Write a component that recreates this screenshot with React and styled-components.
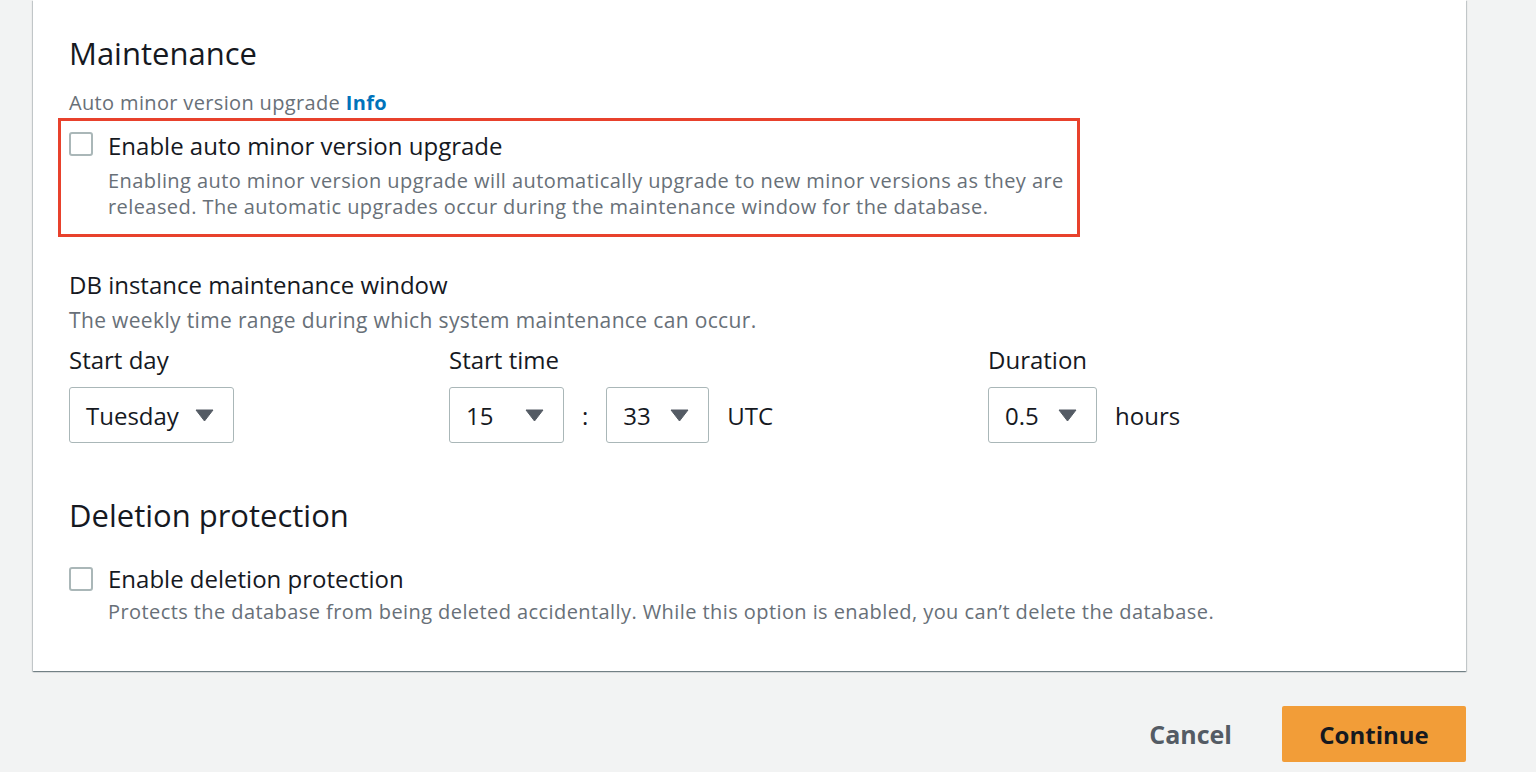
import styled, { createGlobalStyle } from "styled-components";

const GlobalStyle = createGlobalStyle`
  body {
    margin: 0;
    background: #f2f3f3;
    font-family: "Open Sans", "Noto Sans", sans-serif;
    color: #16191f;
  }
  p, h2 {
    margin: 0;
  }
`;

const Page = styled.div`
  padding-left: 33px;
  width: 1433px;
`;

const Card = styled.div`
  background: #fff;
  padding: 31px 36px 46px 36px;
  box-shadow: 0 1px 1px 0 rgba(0, 28, 36, 0.35), 1px 1px 1px 0 rgba(0, 28, 36, 0.15),
    -1px 1px 1px 0 rgba(0, 28, 36, 0.15);
`;

const Heading = styled.h2`
  font-size: 31px;
  font-weight: 400;
  line-height: 44px;
  margin-bottom: ${(props) => props.$gap || "0px"};
`;

const SubLabel = styled.p`
  font-size: 20px;
  letter-spacing: 0.35px;
  line-height: 26px;
  color: #687078;

  a {
    color: #0073bb;
    font-weight: 700;
    text-decoration: none;
  }
`;

const Highlight = styled.div`
  box-sizing: border-box;
  width: 1022px;
  margin-top: 2px;
  margin-left: -11px;
  border: 3px solid #e8412c;
  padding: 10px 8px 14px 8px;
`;

const CheckRow = styled.div`
  display: flex;
  gap: 15px;
  align-items: flex-start;
`;

const Box = styled.span`
  flex: none;
  box-sizing: border-box;
  width: 24px;
  height: 24px;
  margin-top: ${(props) => props.$top || "1px"};
  border: 2px solid #aab7b8;
  border-radius: 3px;
  background: #fff;
`;

const CheckText = styled.div`
  display: flex;
  flex-direction: column;
  gap: ${(props) => props.$gap || "7px"};
`;

const Label = styled.p`
  font-size: 24px;
  line-height: 30px;
  color: #16191f;
`;

const Desc = styled.p`
  font-size: 20px;
  letter-spacing: 0.42px;
  line-height: 26px;
  color: #687078;
  max-width: ${(props) => props.$max || "none"};
`;

const Hint = styled.p`
  margin-top: 7px !important;
  font-size: 21px;
  letter-spacing: 0.35px;
  line-height: 26px;
  color: #687078;
`;

const Field = styled.div`
  margin-top: ${(props) => props.$top || "0px"};
`;

const Columns = styled.div`
  display: flex;
  margin-top: 12px;
`;

const Column = styled.div`
  width: ${(props) => props.$width || "auto"};
  display: flex;
  flex-direction: column;
  gap: 12px;
`;

const Inline = styled.div`
  display: flex;
  align-items: center;
  gap: ${(props) => props.$gap || "18px"};
  font-size: 24px;
`;

const SelectBox = styled.div`
  box-sizing: border-box;
  width: ${(props) => props.$width};
  height: 56px;
  border: 1px solid #aab7b8;
  border-radius: 3px;
  display: flex;
  align-items: center;
  justify-content: space-between;
  padding: 0 19px 0 16px;
  font-size: 24px;
  color: #16191f;
`;

const Footer = styled.div`
  display: flex;
  justify-content: flex-end;
  align-items: center;
  gap: 50px;
  padding-top: 35px;
`;

const LinkButton = styled.button`
  border: none;
  background: none;
  font-family: inherit;
  font-weight: 700;
  font-size: 25px;
  color: #545b64;
  padding: 0;
`;

const PrimaryButton = styled.button`
  border: none;
  border-radius: 2px;
  background: #f29d38;
  width: 184px;
  height: 56px;
  font-family: inherit;
  font-weight: 700;
  font-size: 24px;
  color: #16191f;
`;

function Caret() {
  return (
    <svg width="19" height="13" viewBox="0 0 19 13">
      <path d="M1 1 L18 1 L9.5 12 Z" fill="#545b64" stroke="#545b64" strokeLinejoin="round" />
    </svg>
  );
}

function Select({ value, width }) {
  return (
    <SelectBox $width={width}>
      <span>{value}</span>
      <Caret />
    </SelectBox>
  );
}

function Checkbox({ label, description, max, boxTop, gap }) {
  return (
    <CheckRow>
      <Box $top={boxTop} />
      <CheckText $gap={gap}>
        <Label>{label}</Label>
        <Desc $max={max}>{description}</Desc>
      </CheckText>
    </CheckRow>
  );
}

export default function App() {
  return (
    <Page>
      <GlobalStyle />
      <Card>
        <Heading $gap="15px">Maintenance</Heading>
        <SubLabel>
          Auto minor version upgrade <a href="#">Info</a>
        </SubLabel>
        <Highlight>
          <Checkbox
            label="Enable auto minor version upgrade"
            description="Enabling auto minor version upgrade will automatically upgrade to new minor versions as they are released. The automatic upgrades occur during the maintenance window for the database."
            max="962px"
          />
        </Highlight>

        <Field $top="33px">
          <Label>DB instance maintenance window</Label>
          <Hint>The weekly time range during which system maintenance can occur.</Hint>
          <Columns>
            <Column $width="380px">
              <Label>Start day</Label>
              <Select value="Tuesday" width="165px" />
            </Column>
            <Column $width="539px">
              <Label>Start time</Label>
              <Inline>
                <Select value="15" width="115px" />
                <span>:</span>
                <Select value="33" width="103px" />
                <span>UTC</span>
              </Inline>
            </Column>
            <Column>
              <Label>Duration</Label>
              <Inline>
                <Select value="0.5" width="109px" />
                <span>hours</span>
              </Inline>
            </Column>
          </Columns>
        </Field>

        <Field $top="50px">
          <Heading $gap="27px">Deletion protection</Heading>
          <Checkbox
            label="Enable deletion protection"
            description="Protects the database from being deleted accidentally. While this option is enabled, you can’t delete the database."
            boxTop="3px"
            gap="5px"
          />
        </Field>
      </Card>
      <Footer>
        <LinkButton>Cancel</LinkButton>
        <PrimaryButton>Continue</PrimaryButton>
      </Footer>
    </Page>
  );
}
